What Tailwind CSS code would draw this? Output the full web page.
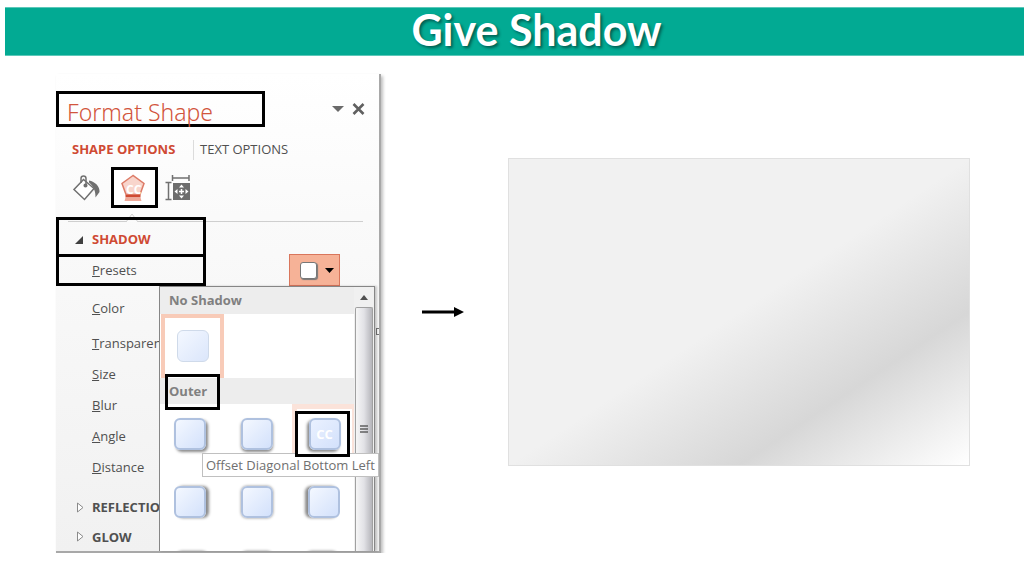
<!DOCTYPE html>
<html lang="en">
<head>
    <meta charset="UTF-8">
    <meta name="viewport" content="width=device-width, initial-scale=1.0">
    <title>Give Shadow</title>
    <script src="https://cdn.jsdelivr.net/npm/@tailwindcss/browser@4"></script>
</head>
<body class="bg-white overflow-x-hidden font-['Open_Sans','Noto_Sans',sans-serif] text-[#505050]">

<header class="mt-[7px] ml-[5px] h-[49px] pl-11 pb-1 flex items-center justify-center bg-[#02aa93] border-y border-[#5cc8b9]">
    <h1 class="font-['Lato',sans-serif] font-bold text-[43px] leading-none text-white [text-shadow:2px_2px_3px_rgba(0,0,0,0.45)]">Give Shadow</h1>
</header>

<main class="flex items-center pt-[18px] pl-14 pr-[54px]">

    <!-- Format Shape pane -->
    <section class="relative shrink-0 w-[325px] text-[13px] bg-linear-to-b from-white via-[#fafafa] via-30% to-[#f1f1f1] border-r-2 border-b-2 border-[#a8a8a8] shadow-[2px_2px_3px_rgba(0,0,0,0.25)]">
        <div class="pt-[17px] pr-[14px] flex items-center justify-between">
            <h2 class="w-[209px] h-9 pl-2 border-3 border-black font-['Noto_Sans',sans-serif] font-light text-[23px] leading-[36px] text-[#d2553c] whitespace-nowrap">Format Shape</h2>
            <div class="flex items-center gap-2">
                <button type="button" aria-label="Pane options">
                    <svg class="w-3 h-[6px]" viewBox="0 0 12 6"><path d="M0 0h12L6 6z" fill="#6a6a6a"/></svg>
                </button>
                <button type="button" aria-label="Close">
                    <svg class="w-[13px] h-3" viewBox="0 0 13 12"><path d="M1.500 1l10 10M11.500 1l-10 10" stroke="#606060" stroke-width="2.600"/></svg>
                </button>
            </div>
        </div>

        <div class="mt-[13px] ml-4 h-5 flex items-center whitespace-nowrap">
            <button type="button" class="w-[121px] text-left font-bold text-[#cf4a33]">SHAPE OPTIONS</button>
            <button type="button" class="h-5 pl-[6px] border-l border-[#dcdcdc]">TEXT OPTIONS</button>
        </div>

        <div class="mt-[7px] pl-4 h-[41px] flex items-center">
            <button type="button" aria-label="Fill and line" class="w-[39px]">
                <svg class="w-7 h-7" viewBox="0 0 28 28" fill="none" stroke="#707070" stroke-width="1.500">
                    <path d="M11.500 5.500L2 15.500l10.500 10 9.500-11z" fill="#fff"/>
                    <path d="M9 9V4.500a2.500 2.500 0 0 1 5 0V11"/>
                    <circle cx="13.500" cy="11.500" r="1.300" fill="#707070"/>
                    <path d="M17 6.500c6 1 11 6 10.500 11.500l-4 5.500c0-6-1-10-6.500-15z" fill="#707070" stroke="none"/>
                </svg>
            </button>
            <button type="button" aria-label="Effects" class="w-[47px] h-[41px] pr-1 flex items-center justify-center border-3 border-black bg-white">
                <svg class="w-6 h-7" viewBox="0 0 24 28">
                    <path d="M12 1.500L1 9.500l4 11h14l4-11z" fill="#f8d5cc" stroke="#dd7b67" stroke-width="1.500"/>
                    <path d="M4.500 21h15v2.500h-15z" fill="#cf4a33"/>
                    <path d="M4.500 23.500h15l1 3.500h-17z" fill="#efa999"/>
                    <text x="5" y="20" font-family="Open Sans" font-weight="700" font-size="12" fill="#fff">CC</text>
                </svg>
            </button>
            <button type="button" aria-label="Size and properties" class="ml-[7px]">
                <svg class="w-[25px] h-[26px]" viewBox="0 0 25 26" fill="none" stroke="#707070" stroke-width="1.500">
                    <path d="M8 3h16M7.500 0v6M24 0v6M3.500 8v16M0.500 7.500h6M0.500 24.500h6"/>
                    <path d="M8 8h17v17H8z" fill="#6c6c6c" stroke="none"/>
                    <path d="M16.500 9.500l2.500 3h-5zM16.500 23.500l2.500-3h-5zM9.500 16.500l3-2.500v5zM23.500 16.500l-3-2.500v5z" fill="#fff" stroke="none"/>
                    <path d="M16.500 14v5M14 16.500h5" stroke="#fff"/>
                </svg>
            </button>
        </div>

        <div class="relative mt-[9px] flex items-end">
            <!-- rule under the icon tabs, with its notch -->
            <div class="absolute top-[4px] left-[12px] right-[16px] h-px bg-[#cfcfcf]"></div>
            <svg class="absolute -top-[5px] left-[70px] w-3 h-[10px]" viewBox="0 0 12 10"><path d="M0 10l6-8 6 8" fill="#fafafa" stroke="#cfcfcf"/></svg>
            <div class="relative w-[150px] border-3 border-black">
                <button type="button" class="w-full h-[37px] pt-[5px] pl-4 flex items-center gap-[9px] border-b-3 border-black font-bold text-[#cf4a33]">
                    <svg class="w-2 h-2" viewBox="0 0 8 8"><path d="M8 0v8H0z" fill="#404040"/></svg>
                    SHADOW
                </button>
                <div class="h-[26px] pl-[33px] leading-[27px]"><u>P</u>resets</div>
            </div>
            <button type="button" aria-label="Presets" class="ml-[83px] w-[51px] h-8 pl-1 flex items-center justify-center gap-2 bg-[#f6b297] border border-[#d9765c]">
                <span class="w-[17px] h-[17px] rounded-[3px] bg-white border border-[#777] shadow-[1px_1px_1px_#777]"></span>
                <svg class="w-[9px] h-[5px]" viewBox="0 0 9 5"><path d="M0 0h9L4.500 5z" fill="#000"/></svg>
            </button>
        </div>

        <ul class="mt-[7px] pl-9 leading-[31px]">
            <li class="mb-1"><u>C</u>olor</li>
            <li><u>T</u>ransparency</li>
            <li><u>S</u>ize</li>
            <li><u>B</u>lur</li>
            <li><u>A</u>ngle</li>
            <li><u>D</u>istance</li>
        </ul>

        <div class="mt-[9px] pl-5 font-bold leading-[30px]">
            <button type="button" class="flex items-center gap-2 h-[30px]">
                <svg class="w-2 h-[11px]" viewBox="0 0 8 11"><path d="M1.500 1v9L7 5.500z" fill="#fff" stroke="#8a8a8a"/></svg>
                REFLECTION
            </button>
            <button type="button" class="flex items-center gap-2 h-[29px]">
                <svg class="w-2 h-[11px]" viewBox="0 0 8 11"><path d="M1.500 1v9L7 5.500z" fill="#fff" stroke="#8a8a8a"/></svg>
                GLOW
            </button>
        </div>

        <!-- edge of the spinner behind the gallery -->
        <div class="absolute top-[254px] right-0 w-[3px] h-[7px] border border-r-0 border-[#777]"></div>

        <!-- Presets gallery -->
        <div class="absolute top-[212px] bottom-0 left-[103px] w-[216px] flex bg-white border border-b-0 border-[#868686] shadow-[2px_0_2px_rgba(0,0,0,0.2)]">
            <div class="flex-1 h-full overflow-hidden">
                <h3 class="h-[27px] pl-[9px] bg-[#ededed] leading-[26px] font-bold text-[#808080]">No Shadow</h3>
                <button type="button" aria-label="No Shadow" class="ml-px w-[63px] h-16 pb-1 flex items-center justify-center border-4 border-b-0 border-[#f8cbb8]">
                    <span class="w-8 h-8 rounded-md border border-[#cfdaea] bg-linear-to-br from-[#f4f8ff] to-[#dbe6fb]"></span>
                </button>
                <div class="relative h-[26px] bg-[#ededed]">
                    <h3 class="absolute -top-[4px] left-[5px] w-[55px] h-9 pl-px border-3 border-black leading-[29px] font-bold text-[#808080]">Outer</h3>
                </div>
                <div class="grid grid-cols-[60px_74px_60px] auto-rows-[68px] -mt-1 justify-items-center items-center">
                    <button type="button" aria-label="Offset Diagonal Bottom Right" class="w-8 h-8 rounded-md border-2 border-[#afc1df] bg-linear-to-br from-[#f4f8ff] to-[#d3e1fb] shadow-[2px_2px_3px_#8a8a8a]"></button>
                    <button type="button" aria-label="Offset Bottom" class="w-8 h-8 rounded-md border-2 border-[#afc1df] bg-linear-to-br from-[#f4f8ff] to-[#d3e1fb] shadow-[0_2px_3px_#8a8a8a]"></button>
                    <div class="relative self-end w-[64px] h-16 border-5 border-r-4 border-[#fbe3da]">
                        <!-- frame stays above the tooltip -->
                        <span class="absolute z-10 top-[2px] -left-[2px] w-[55px] h-[46px] flex items-center justify-center border-3 border-black bg-white">
                            <button type="button" aria-label="Offset Diagonal Bottom Left" class="ml-1 w-8 h-8 rounded-md border-2 border-[#afc1df] bg-linear-to-br from-[#eaf1ff] to-[#d3e1fb] shadow-[-2px_2px_3px_#8a8a8a] leading-none font-bold text-white">CC</button>
                        </span>
                    </div>
                    <button type="button" aria-label="Offset Right" class="w-8 h-8 rounded-md border-2 border-[#afc1df] bg-linear-to-br from-[#f4f8ff] to-[#d3e1fb] shadow-[3px_0_3px_#8a8a8a]"></button>
                    <button type="button" aria-label="Offset Center" class="w-8 h-8 rounded-md border-2 border-[#afc1df] bg-linear-to-br from-[#f4f8ff] to-[#d3e1fb] shadow-[0_0_3px_#8a8a8a]"></button>
                    <button type="button" aria-label="Offset Left" class="w-8 h-8 rounded-md border-2 border-[#afc1df] bg-linear-to-br from-[#f4f8ff] to-[#d3e1fb] shadow-[-3px_0_3px_#8a8a8a]"></button>
                    <button type="button" aria-label="Offset Diagonal Top Right" class="w-8 h-8 rounded-md border-2 border-[#afc1df] bg-[#f4f8ff] shadow-[2px_-3px_3px_#8a8a8a]"></button>
                    <button type="button" aria-label="Offset Top" class="w-8 h-8 rounded-md border-2 border-[#afc1df] bg-[#f4f8ff] shadow-[0_-3px_3px_#8a8a8a]"></button>
                    <button type="button" aria-label="Offset Diagonal Top Left" class="w-8 h-8 rounded-md border-2 border-[#afc1df] bg-[#f4f8ff] shadow-[-2px_-3px_3px_#8a8a8a]"></button>
                </div>
            </div>
            <div class="w-5 flex flex-col bg-[#f0f0f0]">
                <button type="button" aria-label="Scroll up" class="h-5 flex items-center justify-center">
                    <svg class="w-2 h-[5px]" viewBox="0 0 8 5"><path d="M0 5h8L4 0z" fill="#505050"/></svg>
                </button>
                <div class="flex-1 mx-px flex items-center justify-center border border-b-0 border-[#a0a0a0] rounded-t-xs bg-linear-to-r from-[#f6f6f6] via-[#e2e2e6] to-[#b5b5ba]">
                    <svg class="w-2 h-[9px]" viewBox="0 0 8 9"><path d="M0 1h8M0 4h8M0 7h8" stroke="#606060" stroke-width="1.500"/></svg>
                </div>
            </div>
        </div>

        <div role="tooltip" class="absolute top-[379px] left-[146px] h-6 px-[3px] bg-white border border-[#c0c0c0] leading-[22px] text-[#707070] whitespace-nowrap">Offset Diagonal Bottom Left</div>
    </section>

    <div class="flex-1 flex items-center pl-[41px] pb-1">
        <svg class="shrink-0 w-[42px] h-3" viewBox="0 0 42 12"><path d="M0 4.500h32V1l10 5-10 5V7.500H0z" fill="#000"/></svg>

        <!-- Shape with the effect applied -->
        <div class="ml-11 flex-1 aspect-3/2 border border-[#e0e0e0] bg-linear-to-br from-[#f1f1f1] from-50% via-[#d7d7d7] via-75% to-white"></div>
    </div>

</main>

</body>
</html>
